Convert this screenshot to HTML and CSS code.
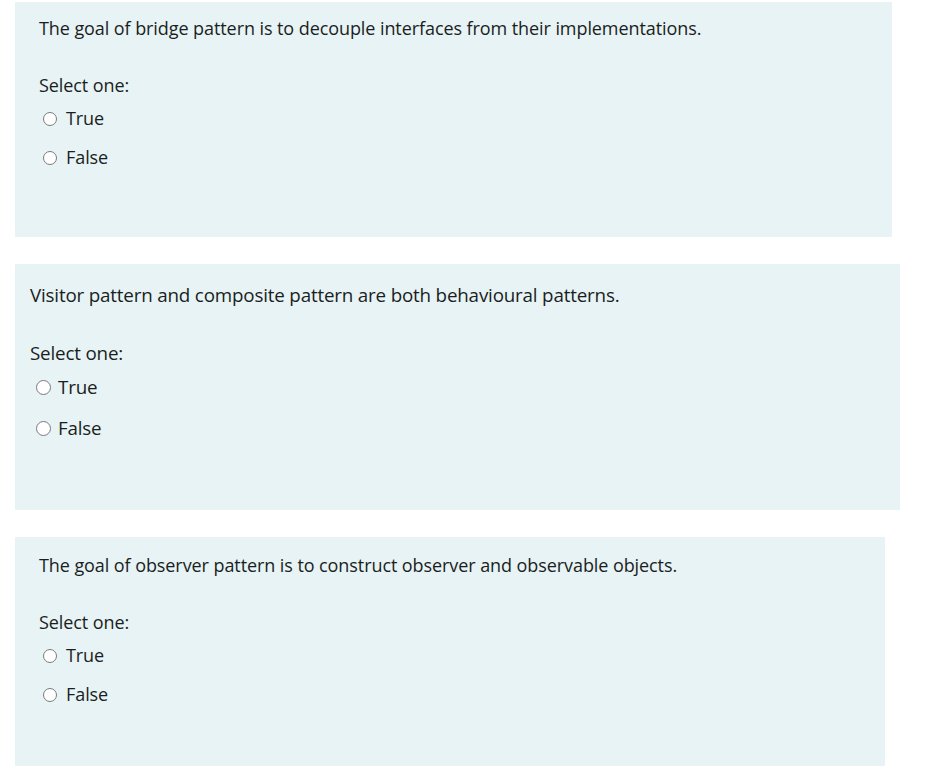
FILE: index.html
```html
<!DOCTYPE html>
<html lang="en">
<head>
<meta charset="utf-8">
<title>Quiz</title>
<link rel="stylesheet" href="styles.css">
</head>
<body>
<main class="quiz">
  <section class="que que-a">
    <div class="qtext">The goal of bridge pattern is to decouple interfaces from their implementations.</div>
    <div class="prompt">Select one:</div>
    <div class="answers">
      <label class="opt"><span class="radio"></span><span class="lbl">True</span></label>
      <label class="opt"><span class="radio"></span><span class="lbl">False</span></label>
    </div>
  </section>
  <section class="que que-b">
    <div class="qtext">Visitor pattern and composite pattern are both behavioural patterns.</div>
    <div class="prompt">Select one:</div>
    <div class="answers">
      <label class="opt"><span class="radio"></span><span class="lbl">True</span></label>
      <label class="opt"><span class="radio"></span><span class="lbl">False</span></label>
    </div>
  </section>
  <section class="que que-c">
    <div class="qtext">The goal of observer pattern is to construct observer and observable objects.</div>
    <div class="prompt">Select one:</div>
    <div class="answers">
      <label class="opt"><span class="radio"></span><span class="lbl">True</span></label>
      <label class="opt"><span class="radio"></span><span class="lbl">False</span></label>
    </div>
  </section>
</main>
</body>
</html>
```
FILE: styles.css
```css
html, body {
  margin: 0;
  padding: 0;
  background: #ffffff;
}
body {
  font-family: "Open Sans", "Noto Sans", sans-serif;
  color: #1a1e22;
  height: 766px;
  overflow: hidden;
}
.quiz {
  display: flex;
  flex-direction: column;
  align-items: flex-start;
  gap: 27px;
  padding: 2px 0 0 15px;
}
.que {
  background: #e7f3f5;
  box-sizing: border-box;
  font-size: 18px;
  line-height: 27px;
  letter-spacing: -0.08px;
  padding: 13px 24px 0;
}
.que-a { width: 877px; height: 235px; }
.que-b { width: 885px; height: 246px; padding: 17px 15px 0; font-size: 18.8px; line-height: 28px; letter-spacing: -0.18px; }
.que-c { width: 870px; height: 240px; padding-top: 15px; }
.qtext { margin: 0; }
.prompt { margin-top: 30px; }
.answers {
  display: flex;
  flex-direction: column;
  gap: 12px;
  margin-top: 6px;
}
.que-b .answers { gap: 13px; margin-top: 6px; }
.opt {
  display: flex;
  align-items: center;
  height: 27px;
}
.que-b .opt { height: 28px; }
.radio {
  box-sizing: border-box;
  width: 14px;
  height: 14px;
  border: 1.5px solid #7b7b7b;
  border-radius: 50%;
  background: #ffffff;
  margin: 1px 9px 0 4px;
  flex: none;
}
.que-b .radio { width: 15px; height: 15px; margin: 1px 7px 0 6px; }
```
